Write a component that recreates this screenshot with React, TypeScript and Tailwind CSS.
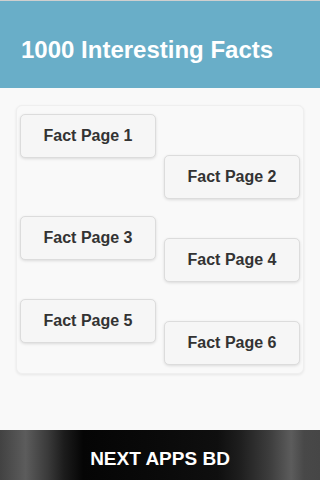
const rows = [
  { left: "Fact Page 1", right: "Fact Page 2", offset: "mt-[41px]" },
  { left: "Fact Page 3", right: "Fact Page 4", offset: "mt-[22px]" },
  { left: "Fact Page 5", right: "Fact Page 6", offset: "mt-[22px]" },
];

function FactButton({ label, className = "" }: { label: string; className?: string }) {
  return (
    <button
      className={
        "flex h-[44px] w-[136px] shrink-0 items-center justify-center rounded-[5px] border border-[#dcdcdc] bg-[#f6f6f6] text-[16px] font-bold text-[#333] shadow-[0_1px_3px_rgba(0,0,0,0.12)] " +
        className
      }
    >
      {label}
    </button>
  );
}

export default function App() {
  return (
    <div className="flex h-[480px] w-[320px] flex-col overflow-hidden bg-[#f9f9f9] font-['Liberation_Sans',Arial,sans-serif]">
      <header className="h-[88px] shrink-0 border-t border-[#cfcfcf] bg-[#69aec8] pl-[21px] pt-[35px]">
        <h1 className="text-[24px] font-bold leading-[28px] text-white">1000 Interesting Facts</h1>
      </header>

      <main className="flex-1 px-4 pt-[17px]">
        <div className="flex flex-col gap-[17px] rounded-[6px] border border-[#efefef] bg-[#f9f9f9] px-[3px] py-[8px] shadow-[0_1px_3px_rgba(0,0,0,0.08)]">
          {rows.map((r) => (
            <div key={r.left} className="flex items-start justify-between">
              <FactButton label={r.left} />
              <FactButton label={r.right} className={r.offset} />
            </div>
          ))}
        </div>
      </main>

      <footer className="h-[50px] shrink-0 bg-[linear-gradient(to_right,#424242_0%,#5c5c5c_8%,#3a3a3a_15%,#1c1c1c_20%,#050505_26%,#0a0a0a_50%,#0f0f0f_68%,#1e1e1e_75%,#3c3c3c_84%,#5c5c5c_91%,#484848_95%,#464646_100%)] pt-[18px] text-center">
        <span className="text-[19px] font-bold leading-[22px] text-white">NEXT APPS BD</span>
      </footer>
    </div>
  );
}
